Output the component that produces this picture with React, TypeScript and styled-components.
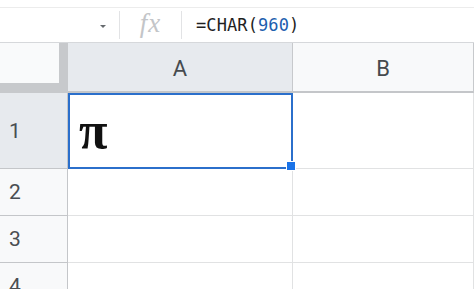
import React from "react"
import styled, { createGlobalStyle } from "styled-components"

const GlobalStyle = createGlobalStyle`
  html, body {
    margin: 0;
    padding: 0;
    background: #ffffff;
    font-family: Roboto, "Liberation Sans", sans-serif;
  }
`

const Page = styled.div`
  width: 474px;
  height: 289px;
  overflow: hidden;
  display: flex;
  flex-direction: column;
`

const TopStrip = styled.div`
  height: 7px;
  flex: none;
  border-bottom: 1px solid #ececec;
`

const FormulaBar = styled.div`
  height: 35px;
  flex: none;
  display: flex;
  align-items: center;
  border-bottom: 1px solid #d6d8db;
  box-sizing: border-box;
`

const NameBox = styled.div`
  width: 119px;
  height: 100%;
  display: flex;
  align-items: center;
  justify-content: flex-end;
  padding-right: 13px;
  box-sizing: border-box;
`

const DropArrow = styled.span`
  width: 0;
  height: 0;
  margin-top: 2px;
  border-left: 3px solid transparent;
  border-right: 3px solid transparent;
  border-top: 3px solid #666a6e;
`

const Divider = styled.div`
  width: 1px;
  height: 28px;
  background: #e2e3e5;
`

const FxBox = styled.div`
  width: 61px;
  display: flex;
  justify-content: center;
  align-items: center;
  font-family: "Liberation Serif", "DejaVu Serif", serif;
  font-style: italic;
  font-size: 27px;
  color: #c3c5c8;
  letter-spacing: 1px;
  padding-bottom: 3px;
`

const FormulaText = styled.div`
  padding-left: 14px;
  font-family: "DejaVu Sans Mono", "Liberation Mono", monospace;
  font-size: 17px;
  color: #1f1f1f;
  letter-spacing: 0.1px;
`

const NumberToken = styled.span`
  color: #1e5fae;
`

const Sheet = styled.div`
  flex: 1;
  display: grid;
  grid-template-columns: 68px 225px 1fr;
  grid-template-rows: 50px 76px 47px 47px 47px;
`

const Corner = styled.div`
  background: #c7c9cc;
  padding: 0 9px 9px 0;
  border-bottom: 1px solid #c7c9cc;
  box-sizing: border-box;
`

const CornerInner = styled.div`
  width: 100%;
  height: 100%;
  background: #f9fafb;
`

const ColHeader = styled.div<{ $active?: boolean }>`
  display: flex;
  align-items: center;
  justify-content: center;
  background: ${p => (p.$active ? "#e7eaee" : "#f8f9fa")};
  border-right: 1px solid #c7c9cc;
  border-bottom: 2px solid #c4c6c9;
  box-sizing: border-box;
  font-size: 22px;
  color: #464a4e;
  padding-top: 2px;
`

const RowHeader = styled.div<{ $active?: boolean }>`
  display: flex;
  align-items: center;
  padding-left: 9px;
  background: ${p => (p.$active ? "#e7eaee" : "#f8f9fa")};
  border-right: 1px solid #c4c6c9;
  border-bottom: 1px solid #c4c6c9;
  box-sizing: border-box;
  font-size: 21px;
  color: #4a4e52;
`

const Cell = styled.div`
  border-right: 1px solid #e1e2e3;
  border-bottom: 1px solid #e1e2e3;
  box-sizing: border-box;
  background: #ffffff;
`

const SelectedCell = styled(Cell)`
  position: relative;
  z-index: 2;
  display: flex;
  align-items: flex-end;
  padding: 0 0 11px 11px;
  font-family: "Liberation Serif", "DejaVu Serif", serif;
  font-weight: 700;
  font-size: 52px;
  line-height: 1;
  color: #111111;

  &::after {
    content: "";
    position: absolute;
    left: 0;
    top: 0;
    right: -1px;
    bottom: -1px;
    border: 2px solid #2b6fcb;
    pointer-events: none;
  }

  &::before {
    content: "";
    position: absolute;
    width: 10px;
    height: 10px;
    right: -4px;
    bottom: -3px;
    box-sizing: border-box;
    background: #1a73e8;
    border: 1px solid #ffffff;
    z-index: 1;
  }
`

const rows = [1, 2, 3, 4]

export default function App() {
  return (
    <Page>
      <GlobalStyle />
      <TopStrip />
      <FormulaBar>
        <NameBox>
          <DropArrow />
        </NameBox>
        <Divider />
        <FxBox>fx</FxBox>
        <Divider />
        <FormulaText>
          =CHAR(<NumberToken>960</NumberToken>)
        </FormulaText>
      </FormulaBar>
      <Sheet>
        <Corner>
          <CornerInner />
        </Corner>
        <ColHeader $active>A</ColHeader>
        <ColHeader>B</ColHeader>
        {rows.map(r => (
          <React.Fragment key={r}>
            <RowHeader $active={r === 1}>{r}</RowHeader>
            {r === 1 ? <SelectedCell>π</SelectedCell> : <Cell />}
            <Cell />
          </React.Fragment>
        ))}
      </Sheet>
    </Page>
  )
}
